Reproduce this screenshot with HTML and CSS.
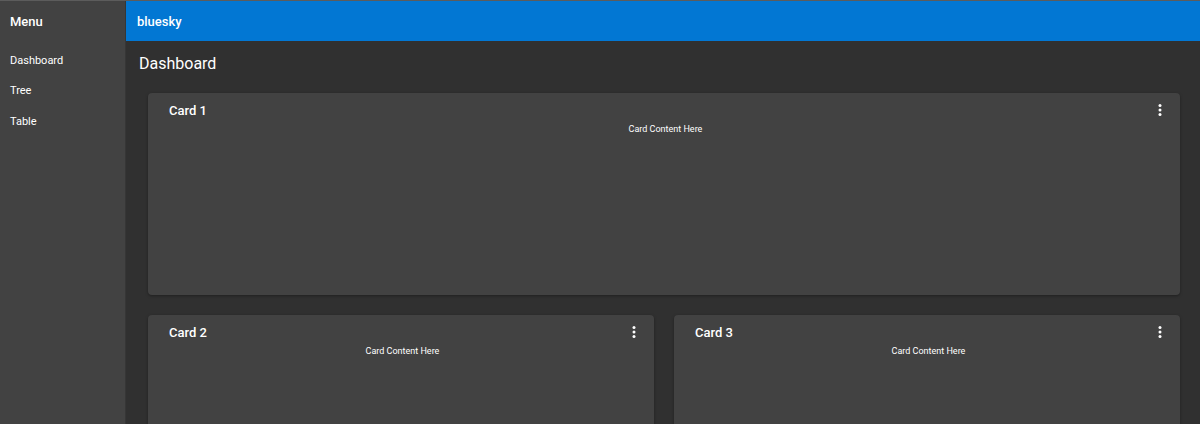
FILE: index.html
```html
<!DOCTYPE html>
<html>
<head>
<meta charset="utf-8">
<link rel="stylesheet" href="styles.css">
</head>
<body>
<div class="app">
  <aside class="sidenav">
    <div class="side-title">Menu</div>
    <nav class="nav">
      <a class="nav-item">Dashboard</a>
      <a class="nav-item">Tree</a>
      <a class="nav-item">Table</a>
    </nav>
  </aside>
  <div class="content">
    <header class="toolbar">bluesky</header>
    <main class="main">
      <h1 class="page-title">Dashboard</h1>
      <div class="grid">
        <section class="card wide">
          <div class="card-header">
            <span class="card-title">Card 1</span>
            <svg class="more" width="4" height="12" viewBox="0 0 4 12"><circle cx="2" cy="1.6" r="1.5" fill="#fff"/><circle cx="2" cy="6" r="1.5" fill="#fff"/><circle cx="2" cy="10.4" r="1.5" fill="#fff"/></svg>
          </div>
          <div class="card-body">Card Content Here</div>
        </section>
        <section class="card">
          <div class="card-header">
            <span class="card-title">Card 2</span>
            <svg class="more" width="4" height="12" viewBox="0 0 4 12"><circle cx="2" cy="1.6" r="1.5" fill="#fff"/><circle cx="2" cy="6" r="1.5" fill="#fff"/><circle cx="2" cy="10.4" r="1.5" fill="#fff"/></svg>
          </div>
          <div class="card-body">Card Content Here</div>
        </section>
        <section class="card">
          <div class="card-header">
            <span class="card-title">Card 3</span>
            <svg class="more" width="4" height="12" viewBox="0 0 4 12"><circle cx="2" cy="1.6" r="1.5" fill="#fff"/><circle cx="2" cy="6" r="1.5" fill="#fff"/><circle cx="2" cy="10.4" r="1.5" fill="#fff"/></svg>
          </div>
          <div class="card-body">Card Content Here</div>
        </section>
      </div>
    </main>
  </div>
</div>
</body>
</html>
```
FILE: styles.css
```css
* { box-sizing: border-box; }
html, body { margin: 0; height: 100%; }
body {
  background: #303030;
  font-family: Roboto, "Liberation Sans", sans-serif;
  color: #fff;
  overflow: hidden;
}
.app {
  display: flex;
  height: 424px;
  overflow: hidden;
  border-top: 1px solid #5c5c5c;
}
.sidenav {
  width: 126px;
  flex: none;
  background: #424242;
  border-right: 1px solid #363636;
}
.side-title {
  height: 40px;
  display: flex;
  align-items: center;
  padding-left: 10px;
  font-size: 13px;
  font-weight: 500;
}
.nav { display: flex; flex-direction: column; padding-top: 4px; }
.nav-item {
  height: 30.5px;
  display: flex;
  align-items: center;
  padding-left: 10px;
  font-size: 11px;
}
.content { flex: 1; display: flex; flex-direction: column; min-width: 0; }
.toolbar {
  height: 40px;
  flex: none;
  background: #0277d3;
  display: flex;
  align-items: center;
  padding-left: 11px;
  font-size: 13px;
  font-weight: 500;
}
.main { padding: 0 20px 0 13px; }
.page-title {
  margin: 0 0 8px;
  height: 44px;
  display: flex;
  align-items: center;
  font-size: 16px;
  font-weight: 400;
}
.grid {
  display: grid;
  grid-template-columns: 1fr 1fr;
  gap: 20px 20px;
  margin-left: 9px;
}
.card {
  background: #424242;
  border-radius: 4px;
  box-shadow: 0 1px 3px rgba(0,0,0,0.35);
  height: 202px;
  padding: 9px 18px 0 21px;
}
.wide { grid-column: 1 / span 2; }
.card-header {
  display: flex;
  justify-content: space-between;
  align-items: center;
  height: 16px;
}
.card-title { font-size: 13px; font-weight: 500; }
.card-body {
  text-align: center;
  font-size: 9px;
  margin-top: 6px;
}
```
